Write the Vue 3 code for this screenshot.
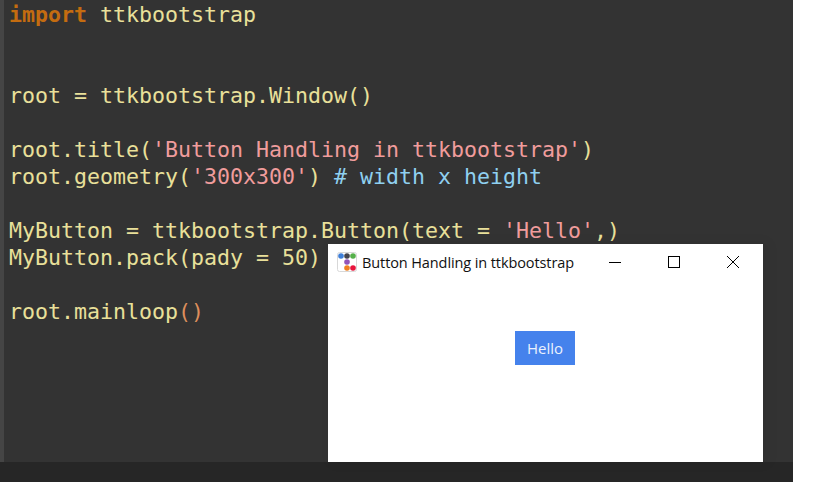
<script setup>
const lines = [
  [['kw', 'import'], ['', ' ttkbootstrap']],
  [],
  [],
  [['', 'root = ttkbootstrap.Window()']],
  [],
  [['', 'root.title('], ['str', "'Button Handling in ttkbootstrap'"], ['', ')']],
  [['', 'root.geometry('], ['str', "'300x300'"], ['', ') '], ['com', '# width x height']],
  [],
  [['', 'MyButton = ttkbootstrap.Button(text = '], ['str', "'Hello'"], ['', ',)']],
  [['', 'MyButton.pack(pady = 50)']],
  [],
  [['', 'root.mainloop'], ['par', '()']],
]
</script>

<template>
  <div class="page">
    <div class="main">
      <div class="editor">
        <div class="gutter"></div>
        <pre class="code"><code v-for="(line, i) in lines" :key="i" class="line"><span v-for="(t, j) in line" :key="j" :class="t[0]">{{ t[1] }}</span></code></pre>
      </div>
      <div class="statusbar"></div>

      <div class="window">
        <div class="titlebar">
          <svg class="appicon" width="20" height="20" viewBox="0 0 20 20">
            <rect x="0.5" y="0.5" width="19" height="19" rx="2" fill="#fff" stroke="#d8d8d8" />
            <circle cx="4" cy="4" r="2.8" fill="#3f7fd8" />
            <circle cx="10" cy="4" r="2.8" fill="#44444c" />
            <circle cx="16" cy="4" r="2.8" fill="#55b04a" />
            <circle cx="10" cy="10" r="2.8" fill="#9354b8" />
            <circle cx="10" cy="16" r="2.8" fill="#f08020" />
            <circle cx="16" cy="16" r="2.8" fill="#e8143c" />
          </svg>
          <span class="wintitle">Button Handling in ttkbootstrap</span>
          <div class="controls">
            <svg width="12" height="12" viewBox="0 0 12 12"><path d="M0 6.5H12" stroke="#000" fill="none" /></svg>
            <svg width="12" height="12" viewBox="0 0 12 12"><rect x="0.5" y="0.5" width="11" height="11" stroke="#000" fill="none" /></svg>
            <svg width="12" height="12" viewBox="0 0 12 12"><path d="M0 0L12 12M12 0L0 12" stroke="#000" fill="none" /></svg>
          </div>
        </div>
        <div class="content">
          <button class="hello">Hello</button>
        </div>
      </div>
    </div>
  </div>
</template>

<style>
html, body { margin: 0; background: #fff; overflow: hidden; }
</style>

<style scoped>
.page {
  width: 816px;
  height: 482px;
  background: #fff;
}
.main {
  position: relative;
  width: 793px;
  height: 482px;
  display: flex;
  flex-direction: column;
}
.editor {
  flex: 1;
  display: flex;
  background: #333333;
  min-height: 0;
}
.gutter {
  width: 4px;
  background: #454545;
}
.code {
  margin: 0;
  padding: 1px 0 0 5px;
  font-family: "DejaVu Sans Mono", "Liberation Mono", monospace;
  font-size: 21.6px;
  line-height: 27px;
  color: #e9e09a;
}
.line {
  display: block;
  height: 27px;
  font-family: inherit;
  white-space: pre;
}
.kw { color: #c46c10; font-weight: 700; }
.str { color: #f09c9c; }
.com { color: #8fd0f0; }
.par { color: #dd8e5c; }
.statusbar {
  height: 20px;
  background: #262626;
}
.window {
  position: absolute;
  left: 328px;
  top: 244px;
  width: 435px;
  height: 218px;
  background: #fff;
  box-shadow: 4px 0 12px rgba(0, 0, 0, 0.08);
  display: flex;
  flex-direction: column;
}
.titlebar {
  height: 36px;
  display: flex;
  align-items: center;
  padding-left: 9px;
}
.appicon { flex: none; margin-right: 5px; }
.wintitle {
  font-family: "Open Sans", "Noto Sans", sans-serif;
  font-size: 14.5px;
  color: #111;
  letter-spacing: -0.1px;
  white-space: nowrap;
}
.controls {
  margin-left: auto;
  display: flex;
  gap: 47px;
  padding-right: 24px;
  align-items: center;
}
.controls svg { display: block; }
.content {
  flex: 1;
  display: flex;
  justify-content: center;
  align-items: flex-start;
  padding: 51px 1px 0 0;
}
.hello {
  width: 60px;
  height: 34px;
  border: 0;
  padding: 0;
  background: #4582ec;
  color: #eaf1fd;
  font-family: "Open Sans", "Noto Sans", sans-serif;
  font-size: 15px;
}
</style>
